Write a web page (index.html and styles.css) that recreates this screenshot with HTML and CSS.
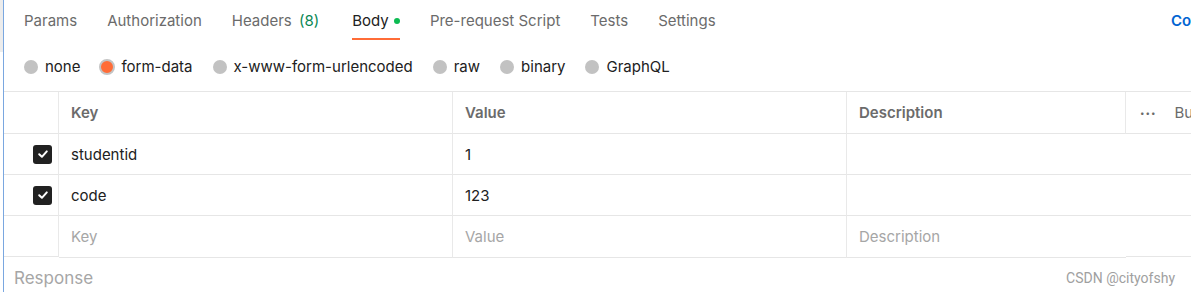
FILE: index.html
```html
<!DOCTYPE html>
<html lang="en">
<head>
    <meta charset="UTF-8">
    <title>Body - form-data</title>
    <link rel="stylesheet" href="styles.css">
</head>
<body>
    <div class="edge"></div>
    <div class="pane">
        <nav class="tabs">
            <span class="tab">Params</span>
            <span class="tab">Authorization</span>
            <span class="tab">Headers <span class="count">(8)</span></span>
            <span class="tab active">Body <span class="dot"></span></span>
            <span class="tab">Pre-request Script</span>
            <span class="tab">Tests</span>
            <span class="tab">Settings</span>
            <span class="cookies">Co</span>
        </nav>

        <div class="modes">
            <label class="mode"><span class="radio"></span>none</label>
            <label class="mode"><span class="radio on"></span>form-data</label>
            <label class="mode"><span class="radio"></span>x-www-form-urlencoded</label>
            <label class="mode"><span class="radio"></span>raw</label>
            <label class="mode"><span class="radio"></span>binary</label>
            <label class="mode"><span class="radio"></span>GraphQL</label>
        </div>

        <div class="grid">
            <div class="cell head"></div>
            <div class="cell head">Key</div>
            <div class="cell head">Value</div>
            <div class="cell head">Description</div>
            <div class="cell head extra"><span class="more">•••</span>Bu</div>

            <div class="cell check"><span class="box">
                <svg width="12" height="12" viewBox="0 0 12 12"><path d="M2.2 6.2 L4.9 8.8 L9.8 3.4" fill="none" stroke="#fff" stroke-width="2" stroke-linecap="round" stroke-linejoin="round"/></svg>
            </span></div>
            <div class="cell">studentid</div>
            <div class="cell">1</div>
            <div class="cell desc"></div>
            <div class="cell extra"></div>

            <div class="cell check"><span class="box">
                <svg width="12" height="12" viewBox="0 0 12 12"><path d="M2.2 6.2 L4.9 8.8 L9.8 3.4" fill="none" stroke="#fff" stroke-width="2" stroke-linecap="round" stroke-linejoin="round"/></svg>
            </span></div>
            <div class="cell">code</div>
            <div class="cell">123</div>
            <div class="cell desc"></div>
            <div class="cell extra"></div>

            <div class="cell check"></div>
            <div class="cell hint">Key</div>
            <div class="cell hint">Value</div>
            <div class="cell hint desc">Description</div>
            <div class="cell extra"></div>
        </div>

        <div class="response">
            <span>Response</span>
            <span class="mark">CSDN @cityofshy</span>
        </div>
    </div>
</body>
</html>
```

FILE: styles.css
```css
body {
    margin: 0;
    font-family: 'Inter', 'Noto Sans', sans-serif;
    font-size: 15px;
    color: #212121;
    background: #fff;
    overflow: hidden;
}
.edge {
    position: absolute;
    left: 0;
    top: 0;
    width: 3px;
    height: 52px;
    background: #ececec;
}
.pane {
    margin-left: 3px;
    border-left: 1px solid #7aa7e0;
    height: 292px;
}
.tabs {
    display: flex;
    align-items: flex-start;
    height: 42px;
    padding-left: 20px;
    gap: 30px;
    position: relative;
}
.tab {
    color: #6b6b6b;
    padding-top: 11px;
    height: 27px;
    border-bottom: 2px solid transparent;
    white-space: nowrap;
}
.tab.active {
    color: #212121;
    border-bottom-color: #ff6c37;
}
.count {
    color: #0a8754;
    margin-left: 3px;
    padding-right: 3px;
}
.dot {
    display: inline-block;
    width: 6px;
    height: 6px;
    border-radius: 50%;
    background: #0cbb52;
    vertical-align: 2px;
    margin-left: 1px;
}
.cookies {
    position: absolute;
    left: 1167px;
    top: 11px;
    color: #0265d2;
    font-weight: 600;
}
.modes {
    display: flex;
    align-items: center;
    height: 49px;
    padding-left: 20px;
    gap: 20px;
}
.mode {
    display: flex;
    align-items: center;
    gap: 7px;
    color: #212121;
}
.radio {
    width: 14px;
    height: 14px;
    border-radius: 50%;
    background: #c2c2c2;
    box-sizing: border-box;
}
.radio.on {
    background: #ff6c37;
    border: 2px solid #c4c4c4;
    width: 16px;
    height: 16px;
    margin-left: -1px;
    margin-right: -1px;
}
.grid {
    display: grid;
    grid-template-columns: 55px 394px 394px 279px 1fr;
    border-top: 1px solid #e6e6e6;
}
.cell {
    height: 40px;
    border-bottom: 1px solid #e6e6e6;
    border-right: 1px solid #e9e9e9;
    display: flex;
    align-items: center;
    padding-left: 12px;
    white-space: nowrap;
    overflow: hidden;
}
.cell.head {
    height: 41px;
    color: #6b6b6b;
    font-weight: 600;
}
.cell.desc,
.cell.extra {
    border-right: none;
}
.cell.extra {
    padding-left: 14px;
}
.cell.hint {
    color: #a6a6a6;
    height: 41px;
}
.cell.check {
    padding-left: 0;
    justify-content: flex-end;
    padding-right: 6px;
}
.more {
    font-size: 8px;
    letter-spacing: 1px;
    color: #6b6b6b;
    margin-right: 18px;
}
.cell.head.extra {
    font-weight: 400;
}
.box {
    width: 19px;
    height: 19px;
    border-radius: 3px;
    background: #212121;
    display: flex;
    align-items: center;
    justify-content: center;
}
.response {
    display: flex;
    justify-content: space-between;
    align-items: center;
    padding: 10px 16px 0 10px;
    font-size: 17px;
    color: #a6a6a6;
}
.mark {
    font-family: 'Roboto', sans-serif;
    font-size: 14px;
    color: #a0a0a0;
}
```
